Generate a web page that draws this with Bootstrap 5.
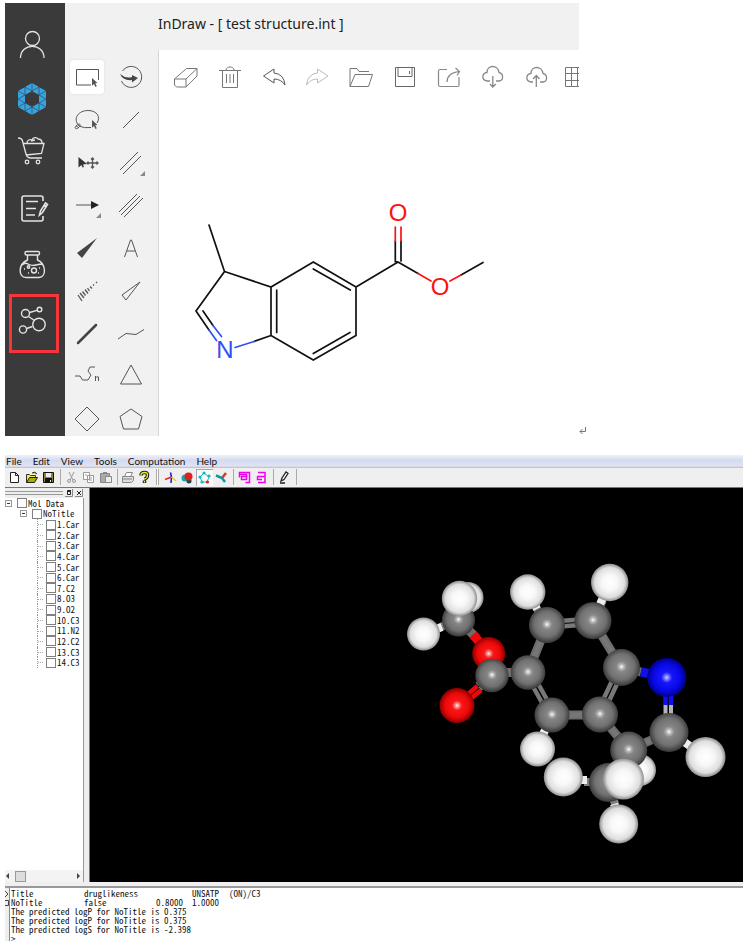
<!DOCTYPE html>
<html lang="en">
<head>
<meta charset="utf-8">
<meta name="viewport" content="width=device-width, initial-scale=1">
<title>InDraw</title>
<link href="https://cdn.jsdelivr.net/npm/bootstrap@5.3.0/dist/css/bootstrap.min.css" rel="stylesheet">
<style>
body{background:#fff;color:#222;font-family:"Noto Sans","Open Sans",sans-serif}
.page{padding:3px 2px 0 5px}
svg{display:block;flex:none}
.btn{--bs-btn-border-width:0;line-height:1;border-radius:0}
/* drawing app */
.drawer{min-height:433px;background:#f1f1f1}
.rail{width:60px;padding-top:11px;background:#3a3a3a;color:#e4e4e4}
.rail .btn{width:60px;height:56px}
.rail .picked{width:50px;height:59px;margin-left:4px;border:3px solid #f8353a;overflow:hidden}
.rail .picked svg{margin:-3px 0 0 -7px}
.rail svg,.palette svg,.actions svg,.tb svg{fill:none}
.rail svg,.palette svg,.actions svg:not([stroke]){stroke:currentColor}
.title-bar{height:47px;padding-left:93px;padding-bottom:5px;font-size:14px;line-height:20px;color:#222}
.palette{width:94px;padding:10px 10px 0 5px;grid-template-columns:34px 34px;column-gap:10px;align-content:space-between;border-right:1px solid #d6d6d6;color:#555}
.palette .btn{width:34px;height:34px;color:inherit}
.palette .picked{background:#fff;border-radius:4px;box-shadow:0 0 3px #ddd}
.actions{padding:10px 0 0 5px;overflow:hidden;color:#777}
.actions .btn{width:44px;height:34px;flex:none;color:inherit}
.sheet{min-width:0}
.sheet text{font:24px "Liberation Sans",sans-serif;text-anchor:middle}
.trail{width:164px;padding-bottom:1px}
/* modelling app */
.modeller{margin-top:19px;background:#efefef}
.menus{height:13px;padding-left:1px;gap:11px;background:linear-gradient(#eef2f8,#d5daef 40%,#dfe3f3 85%,#bbb);font:10px/12px Lato,"Open Sans",sans-serif}
.menus a{color:#111;text-decoration:none}
.tb{height:20px;padding:1px 0 1px 1px;border-bottom:1px solid #777}
.tb .btn{width:17px;height:17px}
.tb .picked{background:#fafafa;box-shadow:inset 1px 1px #aaa}
.sep{flex:none;width:6px;height:16px;background:linear-gradient(90deg,transparent 3px,#aaa 3px,#aaa 4px,transparent 4px)}
.sep.slim{width:5px}
.sep.double{width:9px;background:linear-gradient(90deg,transparent 3px,#aaa 3px,#aaa 4px,#fff 4px,#fff 5px,#aaa 5px,#aaa 6px,transparent 6px)}
.dock{width:85px;background:#eee;padding-right:5px;border-right:1px solid #777}
.dock-head{height:10px;padding-right:1px;gap:2px}
.grip{height:4px;border:solid #999;border-width:1px 0}
.dock-head .btn{width:8px;height:8px}
.mono,.tree{font-family:"Noto Sans CJK SC","Liberation Mono",monospace;font-feature-settings:"hwid";font-size:9px;line-height:9px;color:#111}
.tree-box{background:#fff;min-height:384px;border-right:1px solid #999}
.tree{height:170px;grid-auto-rows:1fr}
.tree li{white-space:nowrap;overflow:hidden}
.tree input{appearance:none;width:10px;height:10px;margin:0 1px 0 0;border:1px solid #808080;background:#fff;flex:none}
.fold{width:7px;height:7px;border:1px solid #999;background:linear-gradient(#333,#333) center/3px 1px no-repeat;margin-right:5px;flex:none}
.lv1{padding-left:15px}
.lv2{padding-left:32px}
.lv2::before{content:"";width:7px;margin-right:2px;align-self:stretch;border-left:1px dotted #999;background:repeating-linear-gradient(90deg,#aaa 0 1px,transparent 1px 2px) 0 5px/100% 1px no-repeat}
.hbar{height:12px;background:#f3f3f3}
.hbar .thumb{width:11px;height:11px;background:#ddd;border:1px solid #999}
.view{background:#000;min-width:0}
.console{border-top:2px solid #999;margin-top:4px;background:#fff}
.mono{padding:1px 0 0 1px}
.gutter{width:5px;background:#eee;border-right:1px solid #888;overflow:hidden}
.mono td,.mono th{padding:0;font-weight:400}
</style>
<script src="https://cdn.jsdelivr.net/npm/bootstrap@5.3.0/dist/js/bootstrap.bundle.min.js"></script>
</head>
<body>
<main class="page">
<section class="d-flex">
 <div class="drawer d-flex flex-grow-1 overflow-hidden">
  <nav class="rail d-flex flex-column flex-shrink-0" aria-label="Modules">
   <button class="btn p-0 text-reset" aria-label="Account"><svg width="60" height="56" viewBox="5 14 60 56" stroke-width="1.3"><circle cx="32.5" cy="38.5" r="7"/><path d="M20.5 58C20.5 42.500 44 42.500 44 58"/></svg></button>
   <button class="btn p-0 text-reset" aria-label="InDraw"><svg width="60" height="56" viewBox="5 70 60 56"><path fill="#35a4e0" fill-rule="evenodd" stroke="none" d="M32 83 46 91V107L32 115 18 107V91ZM32 91 25 95V103L32 107 39 103V95Z"/><path d="M25 87l7 4 7-4M32 83v8M39 87v8l7 4M46 91l-7 4M46 99l-7 4v8M46 107l-7-4M39 111l-7-4-7 4M32 115v-8M25 111v-8l-7-4M18 107l7-4M18 99l7-4v-8M18 91l7 4" stroke="#3a3a3a" stroke-width=".6"/></svg></button>
   <button class="btn p-0 text-reset" aria-label="Shop"><svg width="60" height="56" viewBox="5 126 60 56" stroke-width="1.300"><path d="M18 138q4 0 4.500 3L26 154q1 4 5 4h11M23 143.500h21L41.500 153.500 26 155M27 143c0-3 3-4 5-3 1-3 5-3 6-1 3 0 4 1 4 4M31 141l4-1"/><circle cx="27" cy="162" r="1.800"/><circle cx="38" cy="162" r="1.800"/></svg></button>
   <button class="btn p-0 text-reset" aria-label="Notebook"><svg width="60" height="56" viewBox="5 182 60 56" stroke-width="1.600"><path d="M43 201v-3q0-2-2-2H24q-2 0-2 2v21q0 2 2 2h17q2 0 2-2v-3M26 201.500h12M26 208.500h10M26 215h9M39.500 215l1-4 5-8 2 1.500-5 8ZM44 205l2 1.500"/></svg></button>
   <button class="btn p-0 text-reset" aria-label="Reagents"><svg width="60" height="56" viewBox="5 238 60 56" stroke-width="1.400"><rect x="25" y="251.500" width="14.500" height="3.500" rx="1.500"/><path d="M27.500 255v5C18 264 18 277.500 26 277.500h13C46.500 277 46.500 264 37.500 260v-5M22 265q3-3 6-1t8 1 6-1"/><circle cx="34" cy="270.500" r="2.500"/><circle cx="28.500" cy="267" r="1.200"/><path d="M24 269h1M28 273h1M38 273h1M39 268h1"/></svg></button>
   <button class="btn p-0 text-reset picked" aria-label="Structures"><svg width="60" height="59" viewBox="5 294 60 59" stroke-width="1.400"><circle cx="25.500" cy="313.500" r="4"/><circle cx="39.500" cy="309.500" r="2.300"/><circle cx="39" cy="324.500" r="6.200"/><circle cx="23" cy="329.500" r="3.600"/><path d="M29.500 312.500 37 310.300M28.500 316.500l6 4M26.500 328.500l6-2"/></svg></button>
  </nav>
  <div class="d-flex flex-column flex-grow-1 sheet">
   <header class="title-bar d-flex align-items-center">InDraw - [ test structure.int ]</header>
   <div class="d-flex flex-grow-1">
    <div class="palette d-grid flex-shrink-0" role="toolbar" aria-label="Drawing tools">
     <button class="btn p-0 picked" aria-label="Box select"><svg width="34" height="34"><path d="M21 25H6.500V9.500h22V20"/><path fill="currentColor" stroke="none" d="m22 18 5.500 5-2.200.3 1.500 3-1.300.7-1.500-3-2 1.700Z"/></svg></button>
     <button class="btn p-0" aria-label="Rotate"><svg width="34" height="34"><path d="M8.500 11a10.500 10.500 0 1 1-1 10"/><path fill="#444" stroke="none" d="M6 14q6 5 12 3v-2l6 3-6 4.500v-2.500Q9 21 6 14Z"/></svg></button>
     <button class="btn p-0" aria-label="Lasso select"><svg width="34" height="34"><path d="M21 24.500q-7 1-12-1.500C2 15 9 7.500 18 7.500S31 14 27 20M9 25c-5-5-5 3-1 0s2-6-2-2"/><path fill="currentColor" stroke="none" d="m22 17 5.500 5-2.200.3 1.500 3-1.300.7-1.500-3-2 1.700Z"/></svg></button>
     <button class="btn p-0" aria-label="Single bond"><svg width="34" height="34"><path d="M9 25 25 9"/></svg></button>
     <button class="btn p-0" aria-label="Move"><svg width="34" height="34"><path fill="#333" stroke="none" d="m8.500 11 8.500 7-4 .5 1 2.500-1.500.5-1-2.500-3 2.500Z"/><path stroke-width="1.300" d="M22.500 12v10M17 17h11M21 13.500l1.500-1.500 1.500 1.500M21 20.500l1.500 1.500 1.500-1.500M18.500 15.500 17 17l1.500 1.500M26.500 15.500 28 17l-1.500 1.500"/></svg></button>
     <button class="btn p-0" aria-label="Double bond"><svg width="34" height="34"><path d="M6 24 24 6M9 28 27 10"/><path fill="#888" stroke="none" d="M31 25v5h-5Z"/></svg></button>
     <button class="btn p-0" aria-label="Arrow"><svg width="34" height="34"><path d="M6 17h18"/><path fill="#222" stroke="none" d="m21 13 8 4-8 4Z"/><path fill="#888" stroke="none" d="M31 25v5h-5Z"/></svg></button>
     <button class="btn p-0" aria-label="Triple bond"><svg width="34" height="34"><path d="M5 24 23 6M7 27 26 8M10 29 29 10"/></svg></button>
     <button class="btn p-0" aria-label="Wedge bond"><svg width="34" height="34"><path fill="#444" stroke="none" d="M27 7 7 22l5 5Z"/></svg></button>
     <button class="btn p-0" aria-label="Text"><svg width="34" height="34"><path d="m10.500 26 6-17h1l6 17M13 20h8"/></svg></button>
     <button class="btn p-0" aria-label="Hashed bond"><svg width="34" height="34" stroke-width="1.300"><path d="m8 21 4 6M10 19l4 5M12.500 17.500l3 4M15 15.500l3 4M17.500 14l2 3M20 12.500l2 2M23 10.500l1 1M26 8l1 1"/></svg></button>
     <button class="btn p-0" aria-label="Hollow wedge"><svg width="34" height="34"><path d="M26 8 8 21l4 5Z"/></svg></button>
     <button class="btn p-0" aria-label="Bold bond"><svg width="34" height="34"><path d="M8 26 26 8" stroke="#444" stroke-width="2.500" stroke-linecap="round"/></svg></button>
     <button class="btn p-0" aria-label="Wavy bond"><svg width="34" height="34"><path d="m4 22 8-5.500 10 1 8-5"/></svg></button>
     <button class="btn p-0" aria-label="Polymer"><svg width="34" height="34"><path d="M5 17h5l2.500 4H18l3-5-3-4 2-4h5M25.500 22v-5M25.500 19q1-2 3-1v4"/></svg></button>
     <button class="btn p-0" aria-label="Triangle"><svg width="34" height="34"><path d="m17 6 10.500 19h-21Z"/></svg></button>
     <button class="btn p-0" aria-label="Square"><svg width="34" height="34"><path d="m17 5 12 12-12 12L5 17Z"/></svg></button>
     <button class="btn p-0" aria-label="Pentagon"><svg width="34" height="34"><path d="m17 7 11 7.500-3.500 12.500h-15L6 14.500Z"/></svg></button>
    </div>
    <div class="sheet bg-white flex-grow-1 overflow-hidden">
     <div class="actions d-flex" role="toolbar" aria-label="Document">
      <button class="btn p-0" aria-label="Erase"><svg width="44" height="34" viewBox="164 60 44 34"><path d="m174.500 79 12-10.500h10.500L186 79ZM174.500 79v6l2 2H186V79M186 87l11-11v-7.500"/></svg></button>
      <button class="btn p-0" aria-label="Delete"><svg width="44" height="34" viewBox="208 60 44 34"><path d="M219 70.500h22M222.500 70.500v17h15v-17M226 70c0-4 8-4 8 0M226.500 74v9M230 74v9M233.500 74v9"/></svg></button>
      <button class="btn p-0" aria-label="Undo"><svg width="44" height="34" viewBox="252 60 44 34" stroke="#555"><path d="m263.500 76 10.500-7v4q10 1 11 12-4-6-11-6v4Z"/></svg></button>
      <button class="btn p-0" aria-label="Redo"><svg width="44" height="34" viewBox="296 60 44 34" stroke="#bbb"><path d="m328 76-10.500-7v4q-10 1-11 12 4-6 11-6v4Z"/></svg></button>
      <button class="btn p-0" aria-label="Open"><svg width="44" height="34" viewBox="340 60 44 34"><path d="M350 86.500v-18h7l2 3h10M350 86.500l5-12h17.500l-4 12Z"/></svg></button>
      <button class="btn p-0" aria-label="Save"><svg width="44" height="34" viewBox="384 60 44 34" stroke="#666"><path d="M395.500 67.500h19v19h-19ZM398 67.500v9h14v-9M409.500 71v3"/></svg></button>
      <button class="btn p-0" aria-label="Share"><svg width="44" height="34" viewBox="428 60 44 34" stroke="#888" stroke-width="1.200"><path d="M447 69.500h-7q-1.500 0-1.500 1.500V85q0 1.500 1.500 1.500h17.500q1.500 0 1.500-1.500v-8M447 82q0-9 12-10.500M455.500 68l4 3.500-2.500 4"/></svg></button>
      <button class="btn p-0" aria-label="Download"><svg width="44" height="34" viewBox="472 60 44 34" stroke="#888" stroke-width="1.300"><path d="M490 81h-3c-6-1-5-8 0-8.500 0-8 11-8 12 0 5 1 4.500 8 0 8.500h-3M492.800 76v10.500M490 84l2.800 3 3-3"/></svg></button>
      <button class="btn p-0" aria-label="Upload"><svg width="44" height="34" viewBox="516 60 44 34" stroke="#888" stroke-width="1.300"><path d="M533 82h-2c-6-1-5-8 0-8.500 0-8 11-8 12 0 5 1 4.500 8 0 8.500h-3M536.300 87V76M533 79l3.300-3.500 3.200 3.500"/></svg></button>
      <button class="btn p-0" aria-label="Table"><svg width="44" height="34" viewBox="560 60 44 34"><path d="M565.500 67.500h20v19h-20ZM565.500 73.500h20M565.500 80.500h20M571.500 67v20M577.500 67v20"/></svg></button>
     </div>
     <svg width="420" height="342" viewBox="159 94 420 342" fill="none" stroke="#111" stroke-width="1.700" stroke-linecap="round" role="img" aria-label="Skeletal formula">
      <path d="m209 225 15.500 46.500L196 311M224.500 271.500 271 287l42.300-25L356 287v48.500L313.300 360 271 335.500V287M276.700 290v42.500M313.300 269l37 21M350 332.500l-36.700 21M356 287l42-25 20 11.500M398 262l-2.700-.5V241M401 261V241M461 275l22-12.500M196 311l13 19M203 311l10 14.500M271 335.500l-17 6"/>
      <path stroke="#f11" d="M395.300 241v-14M401 241v-14M418 273.500l13 7.500M450 281l11-6"/>
      <path stroke="#3050f8" d="m209 330 7.500 10.500M213 325.500l8.500 11M254 341.500l-19 6"/>
      <g stroke="none"><text x="398" y="221" fill="#f11">O</text><text x="440" y="295" fill="#f11">O</text><text x="225" y="358" fill="#3050f8">N</text></g>
     </svg>
    </div>
   </div>
  </div>
 </div>
 <div class="trail d-flex align-items-end flex-shrink-0"><svg width="8" height="8" fill="none" stroke="#777" aria-hidden="true"><path d="M6.500 0v4.500H1M3.500 2 1 4.500 3.500 7"/></svg></div>
</section>

<section class="modeller">
 <nav class="menus d-flex" aria-label="Menu"><a href="#">File</a><a href="#">Edit</a><a href="#">View</a><a href="#">Tools</a><a href="#">Computation</a><a href="#">Help</a></nav>
 <div class="tb d-flex" role="toolbar" aria-label="Model tools">
  <button class="btn p-0" aria-label="New"><svg width="17" height="17"><path fill="#fff" stroke="#222" d="M4.500 3.500h5l3 3v7h-8ZM9.500 3.500v3h3"/></svg></button>
  <button class="btn p-0" aria-label="Open"><svg width="17" height="17"><path fill="#ee4" stroke="#333" d="M3.500 13.500v-8h3l1 1h5v2"/><path fill="#aa0" stroke="#222" d="m3.500 13.500 3-5h8l-3 5ZM9 4q3-2 5 1"/></svg></button>
  <button class="btn p-0" aria-label="Save"><svg width="17" height="17"><path fill="#883" stroke="#111" d="M3.500 3.500h10v10h-10Z"/><path fill="#eee" d="M6 4h5v4H6Z"/><path fill="#111" d="M5 9h7v4H5Z"/><path stroke="#eee" d="M10.500 11v2"/></svg></button>
  <span class="sep"></span>
  <button class="btn p-0" aria-label="Cut"><svg width="17" height="17" stroke="#999"><path d="m6 3 4 8M11 3l-4 8"/><circle cx="6" cy="12" r="1.500"/><circle cx="11" cy="12" r="1.500"/></svg></button>
  <button class="btn p-0" aria-label="Copy"><svg width="17" height="17" stroke="#999"><path fill="#fff" d="M3.500 3.500h6v7h-6ZM7.500 6.500h6v7h-6ZM9 9h3M9 11h3M5 6h2"/></svg></button>
  <button class="btn p-0" aria-label="Paste"><svg width="17" height="17" stroke="#888"><path fill="#aaa" d="M3.500 4.500h9v9h-9ZM6 3.500h4"/><path fill="#eee" d="M8.500 7.500h6v6h-6Z"/></svg></button>
  <span class="sep slim"></span>
  <button class="btn p-0" aria-label="Print"><svg width="17" height="17" stroke="#888"><path fill="#fff" d="m5.500 7.500 2-4h6l-2 4"/><path fill="#ddd" d="M3.500 7.500h11v4l-2 2h-9ZM4 10h9"/></svg></button>
  <button class="btn p-0" aria-label="Help"><svg width="17" height="17"><path stroke="#222" stroke-width="3.500" d="M5 6.500q0-3 3.500-3t3 3T8.500 10M8.500 11.500v2.500"/><path stroke="#ee2" stroke-width="1.300" d="M5 6.500q0-3 3.500-3t3 3T8.500 10M8.500 12v1.500"/></svg></button>
  <span class="sep double"></span>
  <button class="btn p-0" aria-label="Wireframe"><svg width="17" height="17" stroke-width="1.500"><path stroke="#11e" d="M8.500 3.500 9.500 8 9 14"/><path stroke="#e22" d="M3 10.500 9.500 8"/><path stroke="#ec2" d="m9.500 8 4.500 4"/></svg></button>
  <button class="btn p-0" aria-label="Space fill"><svg width="17" height="17"><circle cx="6" cy="9" r="3.500" fill="#1aa"/><circle cx="10" cy="12" r="2.500" fill="#244"/><circle cx="9.500" cy="7.500" r="4" fill="#d22"/></svg></button>
  <button class="btn p-0 picked" aria-label="Ball and stick" aria-pressed="true"><svg width="17" height="17" stroke="#1bb"><path d="m8 4 5 4-2 5H6L4 8Z"/><g fill="#1bb" stroke="none"><circle cx="8" cy="4" r="1.600"/><circle cx="13" cy="7" r="1.600"/><circle cx="6" cy="13" r="1.600"/><circle cx="4" cy="8" r="1.600"/><circle cx="11.500" cy="13" r="1.600" fill="#d22"/></g></svg></button>
  <button class="btn p-0" aria-label="Stick"><svg width="17" height="17" stroke-width="2.500"><path stroke="#d33" d="m9 9 4-5"/><path stroke="#199" d="M3 6.500 9 9l3 4"/></svg></button>
  <span class="sep"></span>
  <button class="btn p-0" aria-label="Ribbon"><svg width="17" height="17" stroke="#e0e" stroke-width="1.500"><path d="M3.500 8.500v-5h10v10h-4M3.500 5.500h7v5h-5v-3h6"/></svg></button>
  <button class="btn p-0" aria-label="Loop"><svg width="17" height="17" stroke="#e0e" stroke-width="1.500"><path d="M5 3.500h7v10H5M4 7.500h8M9 10.500H4.500v-3"/></svg></button>
  <span class="sep"></span>
  <button class="btn p-0" aria-label="Edit"><svg width="17" height="17" stroke="#222" stroke-width="1.300"><path fill="#fff" d="m5 12 1-3 4-6 2 1.500-4 6ZM4 14h5"/></svg></button>
  <span class="sep"></span>
 </div>
 <div class="d-flex">
  <aside class="dock flex-shrink-0">
   <div class="dock-head d-flex align-items-center"><span class="grip flex-grow-1"></span>
    <button class="btn p-0" aria-label="Float"><svg width="8" height="8" fill="none" stroke="#222"><path stroke="#888" d="M0 7.500h7.500V0"/><path d="M2 2.500h3.500v3H2.500v-4H6"/></svg></button>
    <button class="btn p-0" aria-label="Close"><svg width="8" height="8" fill="none" stroke="#222"><path stroke="#888" d="M0 7.500h7.500V0"/><path d="m2 2 4 4M6 2 2 6"/></svg></button>
   </div>
   <div class="tree-box d-flex flex-column justify-content-between">
    <ul class="tree d-grid list-unstyled m-0">
     <li class="d-flex align-items-center"><span class="fold"></span><input type="checkbox" id="n0"><label for="n0">Mol Data</label></li>
     <li class="d-flex align-items-center lv1"><span class="fold"></span><input type="checkbox" id="n00"><label for="n00">NoTitle</label></li>
     <li class="d-flex align-items-center lv2"><input type="checkbox" id="n1"><label for="n1">1.Car</label></li>
     <li class="d-flex align-items-center lv2"><input type="checkbox" id="n2"><label for="n2">2.Car</label></li>
     <li class="d-flex align-items-center lv2"><input type="checkbox" id="n3"><label for="n3">3.Car</label></li>
     <li class="d-flex align-items-center lv2"><input type="checkbox" id="n4"><label for="n4">4.Car</label></li>
     <li class="d-flex align-items-center lv2"><input type="checkbox" id="n5"><label for="n5">5.Car</label></li>
     <li class="d-flex align-items-center lv2"><input type="checkbox" id="n6"><label for="n6">6.Car</label></li>
     <li class="d-flex align-items-center lv2"><input type="checkbox" id="n7"><label for="n7">7.C2</label></li>
     <li class="d-flex align-items-center lv2"><input type="checkbox" id="n8"><label for="n8">8.O3</label></li>
     <li class="d-flex align-items-center lv2"><input type="checkbox" id="n9"><label for="n9">9.O2</label></li>
     <li class="d-flex align-items-center lv2"><input type="checkbox" id="n10"><label for="n10">10.C3</label></li>
     <li class="d-flex align-items-center lv2"><input type="checkbox" id="n11"><label for="n11">11.N2</label></li>
     <li class="d-flex align-items-center lv2"><input type="checkbox" id="n12"><label for="n12">12.C2</label></li>
     <li class="d-flex align-items-center lv2"><input type="checkbox" id="n13"><label for="n13">13.C3</label></li>
     <li class="d-flex align-items-center lv2"><input type="checkbox" id="n14"><label for="n14">14.C3</label></li>
    </ul>
    <div class="hbar d-flex align-items-center"><svg width="10" height="8" fill="#444"><path d="M4 1v6L1 4Z"/></svg><span class="thumb"></span><svg class="ms-auto" width="8" height="8" fill="#444"><path d="M2 1v6l3-3Z"/></svg></div>
   </div>
  </aside>
  <div class="view flex-grow-1 overflow-hidden">
   <svg width="100%" height="394" viewBox="90 488 653 394" fill="none" role="img" aria-label="Ball and stick model">
    <defs>
     <radialGradient id="gc" cx=".5" cy=".48"><stop offset="0" stop-color="#fff"/><stop offset=".12" stop-color="#bbb"/><stop offset=".28" stop-color="#868686"/><stop offset=".7" stop-color="#707070"/><stop offset="1" stop-color="#3d3d3d"/></radialGradient>
     <radialGradient id="gh"><stop offset="0" stop-color="#fff"/><stop offset=".4" stop-color="#f8f8f8"/><stop offset=".8" stop-color="#dedede"/><stop offset="1" stop-color="#8c8c8c"/></radialGradient>
     <radialGradient id="go"><stop offset="0" stop-color="#fff"/><stop offset=".12" stop-color="#f88"/><stop offset=".28" stop-color="#fa1616"/><stop offset=".7" stop-color="#ea0808"/><stop offset="1" stop-color="#800"/></radialGradient>
     <radialGradient id="gn"><stop offset="0" stop-color="#ccf"/><stop offset=".12" stop-color="#77f"/><stop offset=".28" stop-color="#1616fa"/><stop offset=".7" stop-color="#0808e6"/><stop offset="1" stop-color="#008"/></radialGradient>
    </defs>
    <g stroke="#6c6c6c" stroke-width="9">
     <path d="M547 625 528 672M593 621l28 46M552 715h48M600 715l29 35 40-18M528 672.500h-36M458.500 620l18 18M621 667l20 5"/>
     <path stroke="#787878" stroke-width="4.500" d="M547 622l46-3.500M547 627.500l46-3.500M526 674l24 43M531 671l24 43M619 666l-22 47M624 669l-22 47M492 672.500l-15 12M495 677l-15 12M666 715v15M671.500 715v15"/>
    </g>
    <path stroke="#767676" stroke-width="5" d="M547 625 528 672M593 621l28 46M552 715h48M600 715l29 35 40-18M528 672.500h-36"/>
    <g stroke="#f00808"><path stroke-width="9" d="m473 634.500 16 19"/><path stroke-width="4.500" d="m477.500 686-20 17M481 690l-20 17"/></g>
    <g stroke="#1010ee"><path stroke-width="9" d="m641 672 26 5"/><path stroke-width="4.500" d="M665.500 677v28M671 677v28"/></g>
    <path stroke="#b4b4b4" stroke-width="4" d="M665.500 705v9M671 705v9"/>
    <path stroke="#808080" stroke-width="8" d="m547 625-13-21M593 621l10-21M552 715l-9 20M669 732l21 14M608 782h-24M608 782l8 25M458 620l-20 8"/>
    <path stroke="#eee" stroke-width="8" d="m537 609-9-17M600 604l10-21M545 730l-7 15M683 741l22 16M587 780h-23M614 804l5 16M442 627l-18 7"/>
    <g fill="url(#gh)"><circle cx="609.700" cy="582.500" r="18.700"/><circle cx="527.700" cy="592" r="17.700"/><circle cx="468" cy="597.500" r="15.500"/><circle cx="423.500" cy="634" r="16.500"/><circle cx="705.500" cy="757" r="20"/><circle cx="640" cy="770" r="16"/></g>
    <g fill="url(#gc)"><circle cx="547" cy="625" r="18"/><circle cx="593" cy="620.700" r="18.500"/><circle cx="621.500" cy="667.500" r="18.500"/><circle cx="600" cy="714.500" r="18"/><circle cx="552" cy="715" r="17.500"/><circle cx="528" cy="672.500" r="17.300"/><circle cx="458.500" cy="620" r="16.500"/><circle cx="669" cy="732.500" r="19.500"/><circle cx="628.700" cy="750" r="18.500"/><circle cx="608.500" cy="782.500" r="19.500"/></g>
    <circle cx="666.700" cy="677.500" r="19.500" fill="url(#gn)"/>
    <circle cx="488.700" cy="653.500" r="16.500" fill="url(#go)"/>
    <circle cx="457" cy="705.500" r="17.500" fill="url(#go)"/>
    <circle cx="492" cy="675.500" r="16.700" fill="url(#gc)"/>
    <g fill="url(#gh)"><circle cx="459.500" cy="598.500" r="17.700"/><circle cx="563.300" cy="777" r="19.500"/><circle cx="623.500" cy="779" r="20.500"/><circle cx="618.700" cy="824" r="19.500"/><circle cx="537.500" cy="749" r="17.500"/></g>
   </svg>
  </div>
 </div>
 <div class="console d-flex">
  <div class="gutter flex-shrink-0"><svg width="5" height="20" fill="none" stroke="#444"><path d="m0 3 3 3-3 3M0 12.500h3.500v5H0"/></svg></div>
  <div class="mono">
   <table><colgroup><col width="73"><col width="72"><col width="36"><col width="37"><col width="40"></colgroup>
    <thead><tr><th>Title</th><th>druglikeness</th><th></th><th>UNSATP</th><th>(ON)/C3</th></tr></thead>
    <tbody><tr><td>NoTitle</td><td>false</td><td>0.8000</td><td>1.0000</td><td></td></tr></tbody></table>
   <div>The predicted logP for NoTitle is 0.375</div>
   <div>The predicted logP for NoTitle is 0.375</div>
   <div>The predicted logS for NoTitle is -2.398</div>
   <div>&gt;</div>
  </div>
 </div>
</section>
</main>
</body>
</html>
